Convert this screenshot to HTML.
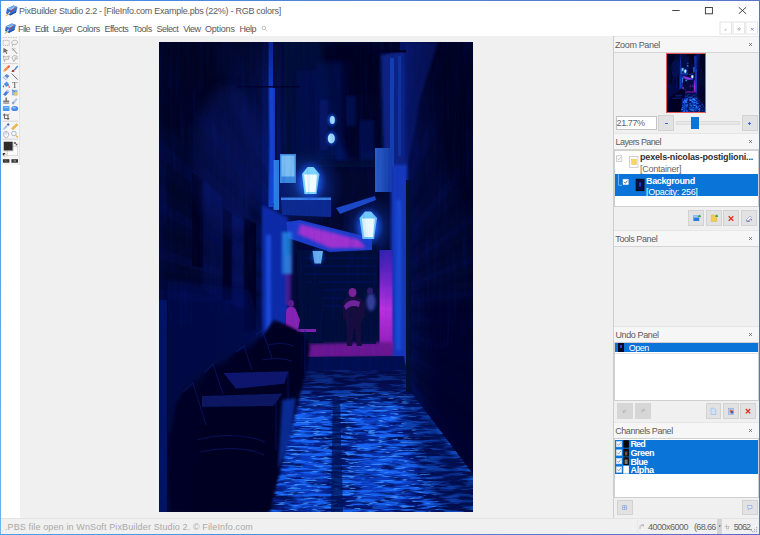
<!DOCTYPE html>
<html><head><meta charset="utf-8"><title>PixBuilder Studio 2.2</title>
<style>
*{box-sizing:border-box;margin:0;padding:0}
html{background:#f0f0f0}html,body{width:760px;height:535px;overflow:hidden}
body{position:relative;font-family:"Liberation Sans",sans-serif;font-size:9px;color:#444}
.a{position:absolute}
.t{position:absolute;white-space:nowrap;line-height:1}
.btn{position:absolute;background:#e2e2e2;border:1px solid #d2d2d2}
.hdr{position:absolute;left:614px;width:145px;height:17px;background:#f6f6f6;border-bottom:1px solid #d4d4d4;border-top:1px solid #e6e6e6}
.list{position:absolute;left:614px;width:145px;background:#fff;border:1px solid #cfcfcf}
.sel{position:absolute;background:#0a74d9}
.x{position:absolute;left:748px;width:5px;height:5px}
</style></head><body>
<!-- window frame -->
<div class="a" style="left:0;top:0;width:760px;height:35.5px;background:#fff"></div>
<div class="a" style="left:0;top:0;width:760px;height:1px;background:linear-gradient(90deg,#4a90e4,#5a74c8)"></div>
<div class="a" style="left:0;top:0;width:1px;height:535px;background:linear-gradient(180deg,#4a90e4,#6cb4f0)"></div>
<div class="a" style="left:759px;top:0;width:1px;height:535px;background:#5a72c0"></div>
<div class="a" style="left:0;top:534px;width:760px;height:1px;background:linear-gradient(90deg,#4aa0e8,#5a6ac8)"></div>
<!-- window buttons -->
<svg class="a" style="left:660px;top:0" width="100" height="36" viewBox="0 0 100 36">
<path d="M12.2 10.5H19.7" stroke="#333" stroke-width="0.9" fill="none"/>
<rect x="45.4" y="7.5" width="7" height="6.3" stroke="#333" stroke-width="0.9" fill="none"/>
<path d="M78.8 7.2L86.2 13.8M86.2 7.2L78.8 13.8" stroke="#333" stroke-width="0.9" fill="none"/>
<g fill="#fff" stroke="#e4e4e4" stroke-width="1"><rect x="60" y="22" width="11.5" height="12"/><rect x="73" y="22" width="11.5" height="12"/><rect x="86" y="22" width="11.5" height="12"/></g>
<rect x="64.5" y="29.5" width="2" height="0.8" fill="#999"/>
<path d="M77 29.5L80 27.5M78 30h2v-2" stroke="#999" stroke-width="0.7" fill="none"/>
<path d="M91 28l2.5 2.5M93.500 28l-2.500 2.500" stroke="#7a8ac0" stroke-width="0.9" fill="none"/>
</svg>
<!-- toolbar -->
<div class="a" style="left:1px;top:36px;width:19px;height:482px;background:#fff"></div>
<div class="a" style="left:1px;top:36px;width:19px;height:128.500px;background:#f5f5f5;border-right:1px solid #e4e4e4"></div>
<svg class="a" style="left:0;top:36px;opacity:0.85" width="21" height="130" viewBox="0 36 21 130">
<path d="M3 37.500H17" stroke="#b8b8b8" stroke-width="0.8" stroke-dasharray="1.5 1"/>
<path d="M2.500 63.6H18" stroke="#c4c4c4" stroke-width="0.8"/>
<path d="M2.500 121.2H18" stroke="#c4c4c4" stroke-width="0.8"/>
<path d="M2.500 139.2H18" stroke="#c4c4c4" stroke-width="0.8"/>
<rect x="3.2" y="40.4" width="6" height="5" fill="none" stroke="#8a8a8a" stroke-width="0.7" stroke-dasharray="1.2 0.8"/>
<path d="M12.2 44.4c-1.5 -3 1 -4.5 3.500 -4c3 0.5 2.500 4 -1 4l-2 0l-0.500 2" fill="none" stroke="#8a8a8a" stroke-width="0.7"/>
<path d="M3.4000000000000004 47.8l5 3.200l-2.300 0.300l1.300 2.300l-1 0.500l-1.300 -2.300l-1.700 1.500z" fill="#555"/>
<path d="M12.2 48.3l5 5.500" stroke="#666" stroke-width="0.9"/><path d="M13.7 47.8l0.5 1.500M11.7 49.8l1.500 0.500M15.7 48.3l-1 1" stroke="#999" stroke-width="0.6"/>
<path d="M3.4000000000000004 56.1l3 1l2.800 -1.200l-0.800 3.500l-3 -0.300l-1 2.500z" fill="none" stroke="#8a8a8a" stroke-width="0.7"/>
<path d="M11.899999999999999 57.1l2 -1.500l3 0.500l0.500 2.500l-2.500 1l-1 2l-1 -2z" fill="none" stroke="#8a8a8a" stroke-width="0.7"/><circle cx="15.2" cy="58.1" r="0.8" fill="#aaa"/>
<path d="M3.2 71.7l1 -2.500l4 -3.800l1.700 1.700l-4 3.800z" fill="#f08030"/><path d="M7.2 66.2l2 -1l0.700 0.700l-1 2z" fill="#e03020"/><path d="M3.2 71.7l0.600 -1.600l1 1z" fill="#f0d080"/>
<path d="M11.7 71.9c0 -2 1 -2.500 2 -2l1 1c-0.500 1 -2 1.500 -3 1z" fill="#802020"/><path d="M13.899999999999999 69.5l3.300 -4l1 1l-3.300 4z" fill="#2870d8"/>
<path d="M3.0 77.6l3.500 -3.500l3 2l-3.500 3.500z" fill="#3878e0"/><path d="M3.0 77.6l1.500 -1.500l3 2l-1.500 1.500z" fill="#e8f0ff" stroke="#3878e0" stroke-width="0.4"/>
<path d="M11.7 73.6l6 6" stroke="#444" stroke-width="0.9"/>
<path d="M3.7 84.0l3 -2.500l2.500 3l-3 2.500z" fill="#3080e8"/><path d="M3.2 85.0c-0.8 1.500 -0.500 2.500 0.300 2.500c0.800 0 1 -1 -0.300 -2.500z" fill="#2060d0"/><path d="M7.2 85.5c2 0 2.500 1 2 2.500" stroke="#e03030" stroke-width="1" fill="none"/>
<text x="14.7" y="87.5" font-family="Liberation Serif,serif" font-size="9" text-anchor="middle" fill="#333">T</text>
<path d="M3.0 94.6l4 -4.500l2.500 1.500l-4 4.500z" fill="#2868e0"/><path d="M5.7 91.1l1.300 -1.500l2.500 1.500l-1.300 1.500z" fill="#a8c8f8"/>
<rect x="11.899999999999999" y="89.8" width="5.600" height="5.600" fill="#78a8e8"/><rect x="14.2" y="92.1" width="3.300" height="3.300" fill="#e8c050"/><path d="M11.899999999999999 89.8l3 2" stroke="#2858c0" stroke-width="0.8"/>
<path d="M5.4 97.6h1.600v3h2.200v2h-6v-2h2.200z" fill="#666"/><rect x="3.2" y="102.8" width="6" height="1" fill="#888"/>
<path d="M11.7 103.1l4.500 -5l1.500 1.300l-4.500 5z" fill="#a8c4ec"/><path d="M11.7 103.1l1.500 -1.700l1.500 1.300l-1.500 1.700z" fill="#8090b0"/>
<rect x="2.9000000000000004" y="106.0" width="6.600" height="5" rx="0.8" fill="#3088ec"/><rect x="3.7" y="106.7" width="5" height="1.500" fill="#70b4f8"/>
<ellipse cx="14.7" cy="108.5" rx="3.400" ry="2.600" fill="#2878e4"/><ellipse cx="14.2" cy="107.7" rx="1.800" ry="1" fill="#70b4f8"/>
<path d="M4.4 113.6v5h5M3.0 115.0h5v5" fill="none" stroke="#333" stroke-width="0.9"/><path d="M7.7 115.3l1.800 -1.800" stroke="#555" stroke-width="0.6"/>
<path d="M3.0 129.79999999999998l0.500 -1.800l3 -3l1.300 1.300l-3 3z" fill="#88b8f0"/><path d="M6.7 124.6l1.500 -1.500l1.500 1.500l-1.500 1.500z" fill="#2050b0"/>
<path d="M11.399999999999999 128.4l5 -5l1.600 1.600l-5 5z" fill="#f0b030" stroke="#c88818" stroke-width="0.4"/>
<path d="M3.7 134.8c-0.500 -2 0.500 -3 1.500 -3.200c1.500 -0.300 3.500 0.500 3.500 2.500c0 2 -1 3.500 -2.500 3.500c-1.500 0 -2 -1 -2.500 -2.800z" fill="#f4f8ff" stroke="#7890b8" stroke-width="0.7"/><path d="M5.2 131.8v2.500M6.7 131.5v2.800" stroke="#7890b8" stroke-width="0.5"/>
<circle cx="13.899999999999999" cy="133.5" r="2.300" fill="#f4f8ff" stroke="#9098a8" stroke-width="0.8"/><path d="M15.7 135.3l2.200 2.200" stroke="#e0a030" stroke-width="1.200"/>
<rect x="7.500" y="146.500" width="10.200" height="9.200" fill="#fff" stroke="#c0c0c0" stroke-width="0.6"/>
<rect x="3.700" y="141.700" width="9" height="8.800" fill="#0a0a0a"/><path d="M4 150.800h9M13 142v8.800" stroke="#777" stroke-width="0.6" fill="none"/>
<path d="M14.500 142.500l2.500 2.500M14.500 142.500h1.500M14.500 142.500v1.500M17 145v-1.500M17 145h-1.500" stroke="#222" stroke-width="0.7" fill="none"/>
<rect x="2.800" y="153" width="2.400" height="2.400" fill="#111"/><rect x="4.300" y="154.300" width="2.200" height="2.200" fill="#fff" stroke="#999" stroke-width="0.4"/>
<rect x="2.900" y="159.200" width="6.500" height="3.500" fill="#161616"/><rect x="11.400" y="159.200" width="6.600" height="3.500" fill="#161616"/>
<path d="M5.500 160.300l1.200 1.200" stroke="#ddd" stroke-width="0.6"/><rect x="13.500" y="160.600" width="2.500" height="0.700" fill="#ddd"/>
</svg>
<svg class="a" style="left:5px;top:4.5px" width="13.0" height="12.0" viewBox="0 0 13 12"><path d="M2 3.500L8.500 0.500L12.500 2L11 7.500L5 10.500L1 8.500Z" fill="#2e6fd0"/><path d="M2 3.500L8.500 0.500L12.500 2L6.500 5Z" fill="#68a8f0"/><path d="M3 3.500l3 0.800l3 -1.800" stroke="#cfe4ff" stroke-width="0.7" fill="none"/><path d="M5 10.500L11 7.500L11.300 6.300L5.200 9.300Z" fill="#1848a0"/><path d="M12.300 0.800L5.500 7.500L4.500 6.700Z" fill="#e03828"/><path d="M5.500 7.500L4.500 6.700L2.800 8.800L3.500 9.400Z" fill="#d8dce8"/><path d="M2.800 8.800L3.500 9.400L1 11.500L0.500 11Z" fill="#e8a020"/></svg>
<svg class="a" style="left:4px;top:22.8px" width="12.35" height="11.399999999999999" viewBox="0 0 13 12"><path d="M2 3.500L8.500 0.500L12.500 2L11 7.500L5 10.500L1 8.500Z" fill="#2e6fd0"/><path d="M2 3.500L8.500 0.500L12.500 2L6.500 5Z" fill="#68a8f0"/><path d="M3 3.500l3 0.800l3 -1.800" stroke="#cfe4ff" stroke-width="0.7" fill="none"/><path d="M5 10.500L11 7.500L11.300 6.300L5.200 9.300Z" fill="#1848a0"/><path d="M12.300 0.800L5.500 7.500L4.500 6.700Z" fill="#e03828"/><path d="M5.500 7.500L4.500 6.700L2.800 8.800L3.500 9.400Z" fill="#d8dce8"/><path d="M2.800 8.800L3.500 9.400L1 11.500L0.500 11Z" fill="#e8a020"/></svg>
<svg class="a" style="left:261px;top:25px" width="8" height="8" viewBox="0 0 8 8"><circle cx="3" cy="3" r="1.800" fill="none" stroke="#aaa" stroke-width="0.7"/><path d="M4.300 4.300l2 2" stroke="#bbb" stroke-width="0.8"/></svg>
<!-- photo -->
<svg class="a" style="left:159px;top:42px" width="314" height="470" viewBox="159 42 314 470"><defs>
<filter id="b1" x="-20%" y="-20%" width="140%" height="140%"><feGaussianBlur stdDeviation="0.7"/></filter>
<filter id="b2" x="-30%" y="-30%" width="160%" height="160%"><feGaussianBlur stdDeviation="1.6"/></filter>
<filter id="b3" x="-30%" y="-30%" width="160%" height="160%"><feGaussianBlur stdDeviation="3"/></filter>
<filter id="b4" x="-30%" y="-30%" width="160%" height="160%"><feGaussianBlur stdDeviation="6"/></filter>
<filter id="nzFloor" color-interpolation-filters="sRGB" x="0" y="0" width="100%" height="100%"><feTurbulence type="fractalNoise" baseFrequency="0.045 0.32" numOctaves="3" seed="7" result="n"/><feColorMatrix in="n" type="matrix" values="0 0 0 0 0.1  0 0 0 0 0.42  0 0 0 0 1  5 0 0 0 -2.2"/><feComposite in2="SourceGraphic" operator="in"/></filter><filter id="nzFloorS" color-interpolation-filters="sRGB" x="0" y="0" width="100%" height="100%"><feTurbulence type="fractalNoise" baseFrequency="0.09 0.5" numOctaves="2" seed="11" result="n"/><feColorMatrix in="n" type="matrix" values="0 0 0 0 0.25  0 0 0 0 0.58  0 0 0 0 1  7 0 0 0 -4.1"/><feComposite in2="SourceGraphic" operator="in"/></filter><filter id="nzFloorD" color-interpolation-filters="sRGB" x="0" y="0" width="100%" height="100%"><feTurbulence type="fractalNoise" baseFrequency="0.05 0.22" numOctaves="2" seed="21" result="n"/><feColorMatrix in="n" type="matrix" values="0 0 0 0 0.01  0 0 0 0 0.04  0 0 0 0 0.25  4.5 0 0 0 -2.1"/><feComposite in2="SourceGraphic" operator="in"/></filter>
<filter id="nzAll" color-interpolation-filters="sRGB" x="0" y="0" width="100%" height="100%"><feTurbulence type="fractalNoise" baseFrequency="0.3 0.018" numOctaves="2" seed="3" result="n"/><feColorMatrix in="n" type="matrix" values="0 0 0 0 0.03  0 0 0 0 0.14  0 0 0 0 0.7  2.4 0 0 0 -1.1"/><feComposite in2="SourceGraphic" operator="in"/></filter>
<linearGradient id="gLW" x1="0" y1="0" x2="1" y2="0"><stop offset="0" stop-color="#040c4a"/><stop offset="0.08" stop-color="#020836"/><stop offset="0.3" stop-color="#020834"/><stop offset="0.65" stop-color="#030c44"/><stop offset="0.82" stop-color="#061668"/><stop offset="1" stop-color="#061668" stop-opacity="0"/></linearGradient>
<linearGradient id="gTop" x1="0" y1="0" x2="0" y2="1"><stop offset="0" stop-color="#010420" stop-opacity="0.6"/><stop offset="1" stop-color="#010420" stop-opacity="0"/></linearGradient>
<linearGradient id="gRW" x1="0" y1="0" x2="1" y2="0"><stop offset="0" stop-color="#061264"/><stop offset="0.3" stop-color="#030a40"/><stop offset="1" stop-color="#020730"/></linearGradient>
<radialGradient id="gGlow1"><stop offset="0" stop-color="#2a7cf0" stop-opacity="0.8"/><stop offset="0.45" stop-color="#1448c8" stop-opacity="0.4"/><stop offset="1" stop-color="#0a2aa0" stop-opacity="0"/></radialGradient>
<radialGradient id="gGlow2"><stop offset="0" stop-color="#2a7cf0" stop-opacity="0.8"/><stop offset="0.45" stop-color="#1448c8" stop-opacity="0.35"/><stop offset="1" stop-color="#0a2aa0" stop-opacity="0"/></radialGradient>
<radialGradient id="gHalo"><stop offset="0" stop-color="#3a90ff" stop-opacity="1"/><stop offset="0.5" stop-color="#1c5cf0" stop-opacity="0.75"/><stop offset="1" stop-color="#0c38c8" stop-opacity="0"/></radialGradient><linearGradient id="gStreak" x1="0" y1="0" x2="0" y2="1"><stop offset="0" stop-color="#082490"/><stop offset="0.3" stop-color="#0e3cc0"/><stop offset="0.6" stop-color="#0a2ca0"/><stop offset="1" stop-color="#1248d0"/></linearGradient><linearGradient id="gAC2" x1="0" y1="0" x2="1" y2="0"><stop offset="0" stop-color="#2c60cc"/><stop offset="1" stop-color="#143ca4"/></linearGradient><linearGradient id="gPur" x1="0" y1="0" x2="0" y2="1"><stop offset="0" stop-color="#3420b0"/><stop offset="0.3" stop-color="#7026c8"/><stop offset="0.6" stop-color="#b830e0"/><stop offset="1" stop-color="#9020b8"/></linearGradient>
<linearGradient id="gFloor" gradientUnits="userSpaceOnUse" x1="268" y1="0" x2="473" y2="0"><stop offset="0" stop-color="#051a7c"/><stop offset="0.2" stop-color="#08269a"/><stop offset="0.33" stop-color="#041264"/><stop offset="0.5" stop-color="#072492"/><stop offset="0.68" stop-color="#051878"/><stop offset="1" stop-color="#030e4a"/></linearGradient>
<linearGradient id="gFloorV" gradientUnits="userSpaceOnUse" x1="0" y1="370" x2="0" y2="512"><stop offset="0" stop-color="#030a44" stop-opacity="0.8"/><stop offset="0.15" stop-color="#030a44" stop-opacity="0.45"/><stop offset="0.3" stop-color="#030a44" stop-opacity="0"/><stop offset="1" stop-color="#030a44" stop-opacity="0.05"/></linearGradient>
<clipPath id="cp"><rect x="159" y="42" width="314" height="470"/></clipPath>
<clipPath id="cpFL"><polygon points="302,371 405,370 408,388 473,474 473,512 266,512 290,425"/></clipPath><clipPath id="cpLW"><polygon points="159,42 215,42 268,150 268,372 159,512"/></clipPath>
<clipPath id="cpRW"><polygon points="406,42 473,42 473,474 408,388"/></clipPath>
</defs><g id="photoG" clip-path="url(#cp)"><rect x="159" y="42" width="314" height="470" fill="#02072e"/>
<rect x="159" y="42" width="140" height="470" fill="url(#gLW)"/>
<g clip-path="url(#cpLW)" opacity="0.45">
<polygon points="345,312 -154,277 -151,251" fill="#07167a" opacity="0.5"/>
<polygon points="345,312 -147,225 -142,200" fill="#01051e" opacity="0.5"/>
<polygon points="345,312 -136,174 -128,149" fill="#07167a" opacity="0.5"/>
<polygon points="345,312 -119,125 -108,101" fill="#01051e" opacity="0.5"/>
<polygon points="345,312 -96,77 -84,54" fill="#07167a" opacity="0.5"/>
<polygon points="345,312 -70,32 -54,11" fill="#01051e" opacity="0.5"/>
<polygon points="345,312 -38,-9 -21,-29" fill="#07167a" opacity="0.5"/>
<polygon points="345,312 -2,-48 17,-65" fill="#01051e" opacity="0.5"/>
<polygon points="345,312 37,-82 58,-98" fill="#07167a" opacity="0.5"/>
<polygon points="345,312 80,-112 103,-125" fill="#01051e" opacity="0.5"/>
<polygon points="345,312 126,-137 150,-148" fill="#07167a" opacity="0.5"/>
<polygon points="345,312 174,-158 199,-166" fill="#01051e" opacity="0.5"/>
<polygon points="345,312 224,-173 250,-179" fill="#07167a" opacity="0.5"/>
</g>
<polygon points="192,172 203,180 203,268 192,266" fill="#020628" filter="url(#b1)"/>
<polygon points="223,208 232,214 232,300 223,300" fill="#020628" filter="url(#b1)"/>
<polygon points="244,218 256,224 256,330 244,332" fill="#020628" filter="url(#b1)"/>
<polygon points="203,180 222,196 222,300 203,290" fill="#0a1c88" opacity="0.3" filter="url(#b2)"/>
<polygon points="232,214 244,222 244,310 232,305" fill="#0a22a0" opacity="0.4" filter="url(#b2)"/>
<polygon points="159,42 206,42 232,95 196,120 159,135" fill="#01041e" opacity="0.5" filter="url(#b4)"/>
<polygon points="215,42 268,42 272,200 262,205" fill="#08208c" opacity="0.22" filter="url(#b3)"/>
<polygon points="159,42 262,42 262,372 159,512" fill="#01041a" opacity="0.28"/>
<rect x="159" y="42" width="314" height="100" fill="url(#gTop)"/>
<polygon points="400,42 473,42 473,474 408,388 404,372" fill="url(#gRW)"/>
<g clip-path="url(#cpRW)" opacity="0.38">
<polygon points="345,312 432,-180 457,-175" fill="#081a80" opacity="0.45"/>
<polygon points="345,312 491,-166 516,-158" fill="#01051e" opacity="0.45"/>
<polygon points="345,312 548,-145 572,-134" fill="#081a80" opacity="0.45"/>
<polygon points="345,312 603,-117 625,-103" fill="#01051e" opacity="0.45"/>
<polygon points="345,312 653,-82 673,-65" fill="#081a80" opacity="0.45"/>
<polygon points="345,312 699,-42 717,-23" fill="#01051e" opacity="0.45"/>
<polygon points="345,312 739,4 755,25" fill="#081a80" opacity="0.45"/>
<polygon points="345,312 774,54 786,77" fill="#01051e" opacity="0.45"/>
<polygon points="345,312 802,109 812,133" fill="#081a80" opacity="0.45"/>
<polygon points="345,312 823,166 830,191" fill="#01051e" opacity="0.45"/>
<polygon points="345,312 837,225 841,251" fill="#081a80" opacity="0.45"/>
<polygon points="345,312 844,286 845,312" fill="#01051e" opacity="0.45"/>
<polygon points="345,312 844,347 841,373" fill="#081a80" opacity="0.45"/>
<polygon points="345,312 836,407 830,433" fill="#01051e" opacity="0.45"/>
<polygon points="345,312 821,467 812,491" fill="#081a80" opacity="0.45"/>
<polygon points="345,312 798,523 786,547" fill="#01051e" opacity="0.45"/>
<polygon points="345,312 769,577 755,599" fill="#081a80" opacity="0.45"/>
<polygon points="345,312 734,627 717,647" fill="#01051e" opacity="0.45"/>
<polygon points="345,312 692,672 673,689" fill="#081a80" opacity="0.45"/>
<polygon points="345,312 646,711 625,727" fill="#01051e" opacity="0.45"/>
</g>
<polygon points="408,42 473,42 473,474 410,392" fill="#01041a" opacity="0.25"/>
<polygon points="420,42 473,42 473,230 440,150" fill="#01051e" opacity="0.7" filter="url(#b4)"/>
<polygon points="425,300 473,300 473,474 430,415" fill="#02062a" opacity="0.7" filter="url(#b4)"/>
<rect x="284" y="42" width="100" height="125" fill="#020838" filter="url(#b3)"/>
<rect x="296" y="70" width="22" height="80" fill="#051058" opacity="0.5" filter="url(#b3)"/>
<rect x="336" y="60" width="18" height="100" fill="#061468" opacity="0.7" filter="url(#b2)"/>
<rect x="356" y="95" width="20" height="60" fill="#08207c" opacity="0.6" filter="url(#b2)"/>
<polygon points="322,42 382,42 382,150 350,162 334,130" fill="#01041a" opacity="0.85" filter="url(#b3)"/>
<rect x="317" y="62" width="26" height="95" fill="#061468" opacity="0.45" filter="url(#b3)"/>
<rect x="320" y="100" width="8" height="50" fill="#081c7c" opacity="0.5" filter="url(#b2)"/>
<rect x="346" y="96" width="10" height="30" fill="#051260" opacity="0.6" filter="url(#b2)"/>
<rect x="360" y="120" width="14" height="40" fill="#051468" opacity="0.55" filter="url(#b2)"/>
<polygon points="406,42 438,42 420,100 408,165 404,165" fill="#08208a" opacity="0.45" filter="url(#b2)"/>
<polygon points="381,55 405,50 406,170 384,170" fill="#082282" filter="url(#b2)"/>
<rect x="390" y="58" width="4" height="108" fill="#1446c0" opacity="0.8" filter="url(#b1)"/>
<rect x="398" y="56" width="3" height="100" fill="#0e38a8" opacity="0.8" filter="url(#b1)"/>
<rect x="366" y="50" width="40" height="2.500" fill="#020628" filter="url(#b1)"/>
<rect x="268.500" y="42" width="4.500" height="165" fill="url(#gStreak)" filter="url(#b1)"/>
<rect x="273.500" y="55" width="3.500" height="150" fill="#020830" filter="url(#b1)"/>
<rect x="236" y="86" width="64" height="1.500" fill="#020628" filter="url(#b1)"/>
<ellipse cx="308" cy="186" rx="36" ry="40" fill="url(#gGlow1)"/>
<ellipse cx="370" cy="228" rx="30" ry="34" fill="url(#gGlow2)"/>
<rect x="270" y="88" width="5" height="115" fill="#1546d4" opacity="0.85" filter="url(#b1)"/>
<ellipse cx="228" cy="160" rx="34" ry="75" fill="#08208a" opacity="0.28" filter="url(#b4)"/>
<rect x="273.500" y="160" width="5.500" height="50" fill="#2a80e4" filter="url(#b1)"/>
<polygon points="262,205 288,218 288,350 276,372 262,372" fill="#0b2aa8" filter="url(#b2)"/>
<rect x="266" y="235" width="5" height="120" fill="#1a4ad8" filter="url(#b2)"/>
<rect x="280" y="154" width="16" height="29" fill="#3a8ae0" filter="url(#b1)"/>
<rect x="281.500" y="155.500" width="13" height="21" fill="#8cccf8" opacity="0.8" filter="url(#b1)"/>
<polygon points="281,198 331,199 331,217 282,215" fill="#0c2c90" filter="url(#b1)"/>
<rect x="281" y="197.500" width="50" height="2.500" fill="#3a80e8" filter="url(#b1)"/>
<rect x="375" y="148" width="17" height="44" fill="url(#gAC2)" filter="url(#b1)"/>
<rect x="391" y="165" width="16" height="200" fill="#1238bc" filter="url(#b2)"/>
<rect x="396" y="200" width="5" height="150" fill="#1c50dc" opacity="0.8" filter="url(#b2)"/>
<polygon points="296,250 378,246 380,345 300,345" fill="#030838" filter="url(#b2)"/>
<polygon points="286,222 300,220 372,238 372,250 330,252 288,238" fill="#1a3ccc" filter="url(#b1)"/>
<polygon points="300,224 360,240 366,248 330,248 298,234" fill="#a030d0" filter="url(#b2)"/>
<polygon points="336,208 375,196 376,200 340,214" fill="#1a48c8" filter="url(#b1)"/>
<rect x="379.500" y="250" width="13" height="98" fill="url(#gPur)" filter="url(#b1)"/>
<polygon points="304,344 393,342 393,357 306,358" fill="#6c1692" filter="url(#b2)"/>
<rect x="285" y="255" width="6" height="50" fill="#5a1c9c" opacity="0.7" filter="url(#b2)"/>
<g stroke="#071462" stroke-width="1.6" opacity="0.7" filter="url(#b1)"><path d="M303 258H376M304 266H376M305 274H376M306 282H376M322 290H346M324 298H344M325 306H343"/></g>
<path d="M312 283c0 -4 6 -4 6 0l0 4c4 1 6 4 6 10l-1 46h-13l-2 -46c0 -6 1 -9 4 -10z" fill="#050a3a" filter="url(#b1)"/>
<path d="M349 292c0 -5 7 -5 7 0l0 4c6 1 9 5 10 12l-2 14l-3 0l1 24h-5l-3 -18l-2 18h-5l-1 -26l-3 -1l-1 -12c1 -7 3 -10 7 -11z" fill="#12093e" filter="url(#b1)"/>
<ellipse cx="352.500" cy="292.500" rx="4" ry="4.500" fill="#7a2498" filter="url(#b1)"/>
<path d="M344 306c3 -6 10 -7 16 -4l-1 5c-5 -2 -10 -1 -13 3z" fill="#8a2cb0" opacity="0.8" filter="url(#b1)"/>
<ellipse cx="371" cy="302" rx="4.500" ry="9" fill="#34409c" filter="url(#b2)"/>
<ellipse cx="370" cy="291" rx="3" ry="3.500" fill="#2a1c68" filter="url(#b1)"/>
<rect x="362" y="318" width="14" height="26" fill="#04083a" opacity="0.8" filter="url(#b1)"/>
<path d="M286 312c0 -6 8 -7 10 -2l4 10l-2 10h-12z" fill="#8424b4" filter="url(#b1)"/>
<ellipse cx="291" cy="303.500" rx="3" ry="3.500" fill="#5a1c90" filter="url(#b1)"/>
<rect x="296" y="329" width="20" height="3" fill="#7a20b0" filter="url(#b1)"/>
<polygon points="304,357 404,356 406,371 302,372" fill="#041050" filter="url(#b1)"/>
<polygon points="302,371 405,370 408,388 473,474 473,512 266,512 290,425" fill="url(#gFloor)"/>
<g clip-path="url(#cpFL)" fill="#0e46d8" filter="url(#b4)" opacity="0.75"><ellipse cx="311" cy="416" rx="18" ry="13"/><ellipse cx="306" cy="476" rx="22" ry="30"/><ellipse cx="376" cy="414" rx="28" ry="13"/><ellipse cx="384" cy="476" rx="32" ry="30"/></g>
<polygon points="302,371 405,370 408,388 473,474 473,512 266,512 290,425" fill="url(#gFloorV)"/>
<polygon points="302,371 405,370 408,388 473,474 473,512 266,512 290,425" fill="#fff" filter="url(#nzFloorD)" opacity="0.7"/>
<polygon points="302,371 405,370 408,388 473,474 473,512 266,512 290,425" fill="#fff" filter="url(#nzFloor)" opacity="0.9"/>
<g clip-path="url(#cpFL)"><polygon points="286,396 410,392 440,512 268,512" fill="#fff" filter="url(#nzFloorS)" opacity="0.85"/></g>
<polygon points="302,371 405,370 408,388 473,474 473,512 266,512 290,425" fill="url(#gFloorV)"/>
<polygon points="333,398 340,398 343,512 331,512" fill="#04125c" opacity="0.75" filter="url(#b1)"/>
<polygon points="404,372 408,372 473,500 473,512 466,512" fill="#04125c" opacity="0.35" filter="url(#b2)"/>
<polygon points="408,388 473,474 473,512 440,512 400,420" fill="#03104c" opacity="0.45" filter="url(#b4)"/>
<rect x="406" y="180" width="5" height="212" fill="#020730" filter="url(#b1)"/>
<polygon points="168,280 250,290 262,336 236,352 210,368 184,390 168,450" fill="#051062" opacity="0.45" filter="url(#b3)"/>
<polygon points="176,404 184,390 200,386 210,368 226,364 236,352 250,348 262,336 274,320 290,327 304,335 310,346 306,372 292,425 268,512 170,512 168,450" fill="#020626" filter="url(#b2)"/>
<polygon points="200,420 230,400 236,360 272,340 278,323 292,329 306,339 304,372 290,425 270,512 190,512" fill="#010420" filter="url(#b2)"/>
<g fill="none" stroke="#0a1c78" stroke-width="1.2" opacity="0.55" filter="url(#b1)"><path d="M183 392l10 -9l13 42M205 372l8 -8l10 30M197 440c20 -6 50 -6 68 2M200 452c22 -5 48 -5 64 3M236 352l8 -6l8 24M256 335l6 -5l10 28M262 360c10 -2 22 -2 30 1M268 345c8 -2 18 -2 26 1M288 372v40M276 395v55M305 330v45"/></g>
<rect x="159" y="300" width="8" height="212" fill="#061670" opacity="0.8" filter="url(#b1)"/>
<polygon points="223.500,373 288.700,371.300 284.400,383.800 236,388.800" fill="#08196c" filter="url(#b1)"/>
<polygon points="202,396 282.600,393.500 273.700,406 202,407" fill="#071660" filter="url(#b1)"/>
<polygon points="282,400 296,398 290,440 278,470" fill="#0c3cc0" opacity="0.7" filter="url(#b2)"/>
<ellipse cx="310.500" cy="181" rx="17" ry="21" fill="url(#gHalo)"/>
<ellipse cx="368.500" cy="226" rx="16" ry="20" fill="url(#gHalo)"/>
<ellipse cx="332" cy="120" rx="6" ry="8" fill="url(#gHalo)" opacity="0.8"/>
<ellipse cx="331.500" cy="138.500" rx="7" ry="9" fill="url(#gHalo)" opacity="0.8"/>
<ellipse cx="317.500" cy="257" rx="9" ry="10" fill="url(#gHalo)" opacity="0.6"/>
<polygon points="302,174 307.500,167 313.500,167 319.500,174 316.500,194 304.500,194" fill="#7cd4ff" filter="url(#b1)"/>
<polygon points="304,174.500 317.500,174.500 315.500,192 306,192" fill="#eefcff" filter="url(#b1)"/>
<polygon points="359.500,218 365,211.500 371,211.500 377,218 374,239 362.500,239" fill="#70c8ff" filter="url(#b1)"/>
<polygon points="362,218.500 375,218.500 373,237 364,237" fill="#e8faff" filter="url(#b1)"/>
<ellipse cx="332.300" cy="120" rx="2.500" ry="4" fill="#a8e0ff" filter="url(#b1)"/>
<ellipse cx="331.300" cy="138.500" rx="3.500" ry="5" fill="#a8e0ff" filter="url(#b1)"/>
<polygon points="312.500,251 323,251 321,263.500 314.500,263.500" fill="#6ab0f0" filter="url(#b1)"/>
<rect x="282" y="232" width="10" height="42" fill="#2a9cf0" opacity="0.7" filter="url(#b2)"/>
<polygon points="159,42 473,42 473,330 404,372 300,372 290,300 159,330" fill="#fff" filter="url(#nzAll)" opacity="0.14"/></g></svg>
<!-- right panels -->
<div class="a" style="left:613px;top:36px;width:1px;height:482px;background:#cfcfcf"></div>
<div class="hdr" style="top:35.500px"></div>
<div class="hdr" style="top:132.500px"></div>
<div class="hdr" style="top:229.500px"></div>
<div class="hdr" style="top:325.500px"></div>
<div class="hdr" style="top:421.500px"></div>
<svg class="a" style="left:0;top:0" width="760" height="535" viewBox="0 0 760 535"><g stroke="#666" stroke-width="0.8" fill="none">
<path d="M749 43l3 3m0-3l-3 3"/><path d="M749 140l3 3m0-3l-3 3"/><path d="M749 237l3 3m0-3l-3 3"/><path d="M749 333l3 3m0-3l-3 3"/><path d="M749 429l3 3m0-3l-3 3"/></g></svg>
<!-- zoom panel -->
<div class="a" style="left:666px;top:53px;width:40px;height:60px;background:#e05a5a"></div><svg class="a" style="left:667px;top:54px" width="38" height="58" viewBox="159 42 314 470" preserveAspectRatio="none"><use href="#photoG"/></svg>
<div class="a" style="left:615.500px;top:115.500px;width:41px;height:14.500px;background:#fff;border:1px solid #c4c4c4"></div>
<div class="btn" style="left:658px;top:115px;width:16px;height:15.500px"></div>
<div class="btn" style="left:741.500px;top:115px;width:16px;height:15.500px"></div>
<div class="a" style="left:676px;top:121px;width:64px;height:4px;background:#e7e7e7;border:1px solid #dcdcdc"></div>
<div class="a" style="left:691px;top:116.500px;width:7.500px;height:12px;background:#0a74d9"></div>
<div class="a" style="left:664.500px;top:122.500px;width:3px;height:1px;background:#4466cc"></div>
<div class="a" style="left:748px;top:122.500px;width:3px;height:1px;background:#4466cc"></div>
<div class="a" style="left:749px;top:121.500px;width:1px;height:3px;background:#4466cc"></div>
<!-- layers panel -->
<div class="list" style="top:150px;height:57px"></div>
<div class="sel" style="left:615px;top:173.700px;width:142.500px;height:22.300px"></div>
<svg class="a" style="left:614px;top:150px" width="145" height="80" viewBox="614 150 145 80">
<rect x="616.400" y="155.700" width="5.400" height="5.600" fill="#fff" stroke="#c4c4c4" stroke-width="0.8"/>
<path d="M617.600 158.600l1.200 1.300l2-2.700" stroke="#a8a8a8" stroke-width="0.7" fill="none"/>
<rect x="629.400" y="156.500" width="8.500" height="10.800" fill="#fff" stroke="#c4c4c4" stroke-width="0.8"/>
<rect x="631.700" y="159.200" width="4.600" height="5.400" fill="#f6d664" stroke="#e8c048" stroke-width="0.500"/>
<path d="M618.500 174v11.300h3.500" stroke="#8cc0f4" stroke-width="0.800" fill="none"/>
<rect x="623" y="179.200" width="5.300" height="5.500" fill="#fff" stroke="#d8e4f4" stroke-width="0.500"/>
<path d="M624.100 181.900l1.300 1.400l2-2.600" stroke="#444" stroke-width="0.800" fill="none"/>
<rect x="636.200" y="179.300" width="7.800" height="11.300" fill="#050e48" stroke="#0a0a14" stroke-width="1"/>
<rect x="639.300" y="182.500" width="1.500" height="4" fill="#2450d8"/>
<!-- button icons -->
<rect x="693.400" y="215.200" width="5.800" height="5.800" fill="#2a7ae4"/><rect x="693.400" y="215.200" width="5.800" height="2.500" fill="#9cc8f4"/><path d="M697.500 216.800l2.500-2.300l1 2.800z" fill="#30a040"/>
<path d="M711.300 215h3l1 1h1.500v5.500h-5.500z" fill="#f4cc50" stroke="#d8a830" stroke-width="0.400"/><path d="M714.800 216.500l2.300-2.300l1 2.800z" fill="#30a040"/>
<path d="M728.700 216.200l4.600 4.600m0-4.600l-4.600 4.600" stroke="#e03020" stroke-width="1.300" fill="none"/>
<path d="M746.500 219.500l3.500-3.500l1.500 1.500l-3.500 3.500z" fill="#f8f8ff" stroke="#5080d0" stroke-width="0.500"/><path d="M746 220.500l1.500 1l2.500-0.500" stroke="#3060c0" stroke-width="0.800" fill="none"/><circle cx="751.300" cy="219.800" r="0.800" fill="#e04040"/>
</svg>
<div class="btn" style="left:688.400px;top:210.300px;width:16px;height:16.100px;z-index:-1"></div>
<div class="btn" style="left:706.300px;top:210.300px;width:15.300px;height:16.100px;z-index:-1"></div>
<div class="btn" style="left:723.400px;top:210.300px;width:15.300px;height:16.100px;z-index:-1"></div>
<div class="btn" style="left:741.300px;top:210.300px;width:15.500px;height:16.100px;z-index:-1"></div>
<!-- undo panel -->
<div class="list" style="top:342px;height:58.500px"></div>
<div class="sel" style="left:615px;top:343.400px;width:142.500px;height:8.200px"></div>
<div class="a" style="left:615px;top:352.600px;width:142.500px;height:1px;background:#e4e4e4"></div>
<div class="a" style="left:618px;top:343.400px;width:5.600px;height:8.200px;background:#030928"></div>
<div class="a" style="left:620.300px;top:345px;width:1.300px;height:3px;background:#2048c8"></div>
<div class="a" style="left:616.900px;top:403.400px;width:16.100px;height:15.600px;background:#d6d6d6"></div>
<div class="a" style="left:635px;top:403.400px;width:16px;height:15.600px;background:#d6d6d6"></div>
<div class="btn" style="left:705.500px;top:403.400px;width:15.900px;height:15.600px"></div>
<div class="btn" style="left:723px;top:403.400px;width:16px;height:15.600px"></div>
<div class="btn" style="left:740.100px;top:403.400px;width:16px;height:15.600px"></div>
<svg class="a" style="left:614px;top:400px" width="145" height="22" viewBox="614 400 145 22">
<path d="M623.500 412.500c0-2 2-2.500 3-1.500M623 410.500l0.500 2l2-0.500" stroke="#aaa" stroke-width="0.700" fill="none"/>
<path d="M642 412.500v-2.500h2.500M643.500 409l1.200 1l-1.200 1" stroke="#aaa" stroke-width="0.700" fill="none"/>
<path d="M711 408.200h3.300l1.500 1.500v4.800h-4.800z" fill="#cfe2fa" stroke="#8cb0e4" stroke-width="0.500"/>
<rect x="728.500" y="408.200" width="5" height="6.300" fill="#b8d0f4" stroke="#7c9cd8" stroke-width="0.500"/><rect x="729.800" y="409.800" width="2.800" height="2.800" fill="#e07030"/><rect x="730.800" y="411" width="2.500" height="2.500" fill="#4060d0"/>
<path d="M745.800 409l4.400 4.400m0-4.400l-4.400 4.400" stroke="#e03020" stroke-width="1.300" fill="none"/>
</svg>
<!-- channels -->
<div class="list" style="top:438px;height:59.500px"></div>
<div class="sel" style="left:615px;top:439.600px;width:142.500px;height:34px"></div>
<svg class="a" style="left:614px;top:438px" width="145" height="80" viewBox="614 438 145 80">
<g fill="#f4f8fc" stroke="#c8d4e4" stroke-width="0.500">
<rect x="616.200" y="441.300" width="5.600" height="5.600"/><rect x="616.200" y="449.800" width="5.600" height="5.600"/><rect x="616.200" y="458.300" width="5.600" height="5.600"/><rect x="616.200" y="466.800" width="5.600" height="5.600"/></g>
<g stroke="#888" stroke-width="0.800" fill="none">
<path d="M617.300 444l1.300 1.400l2.200-2.800"/><path d="M617.300 452.500l1.300 1.400l2.200-2.800"/><path d="M617.300 461l1.300 1.400l2.200-2.800"/><path d="M617.300 469.500l1.300 1.400l2.200-2.800"/></g>
<rect x="623.300" y="440.200" width="5.600" height="7.500" fill="#050505"/>
<rect x="623.300" y="448.700" width="5.600" height="7.800" fill="#0a0a0a"/><rect x="624.800" y="451.500" width="2.600" height="4" fill="#555"/>
<rect x="623.300" y="457.200" width="5.600" height="7.800" fill="#101010"/><rect x="624.600" y="459.500" width="3" height="4.500" fill="#777"/>
<rect x="623.300" y="465.800" width="5.600" height="7.800" fill="#fff"/>
<path d="M622.500 505.500h4v4h-4zM624.500 505.500v4M622.500 507.500h4" stroke="#7c9cdc" stroke-width="0.600" fill="#dce8fa"/>
<path d="M747.500 505.500h4.500v3h-2.500l-1 1.500z" stroke="#7c9cdc" stroke-width="0.600" fill="#e4ecfa"/>
</svg>
<div class="btn" style="left:617.300px;top:500.200px;width:16px;height:15.300px;z-index:-1"></div>
<div class="btn" style="left:741.500px;top:500.200px;width:16px;height:15.300px;z-index:-1"></div>
<!-- status -->
<div class="a" style="left:1px;top:518px;width:758px;height:16px;background:#f0f0f0;border-top:1px solid #e4e4e4"></div>
<div class="a" style="left:717.300px;top:519px;width:5px;height:14.700px;background:#d4d4d4"></div>
<svg class="a" style="left:630px;top:518px" width="130" height="17" viewBox="630 518 130 17">
<path d="M637.700 520v13" stroke="#e4e4e4" stroke-width="0.800"/>
<path d="M640 529.200v-3.500h3.500M641.500 524.500h2v2" stroke="#a8a8a8" stroke-width="0.700" fill="none"/>
<path d="M718.800 525.500h2l-1 1.500z" fill="#333"/>
<path d="M725 526.500h4.500M726.500 524.500v4.500M728.500 526.500v2.500h-2" stroke="#b0b0b0" stroke-width="0.700" fill="none"/>
<g fill="#b4b4b4"><rect x="756" y="531" width="1.200" height="1.200"/><rect x="754" y="531" width="1.200" height="1.200"/><rect x="756" y="529" width="1.200" height="1.200"/><rect x="752" y="531" width="1.200" height="1.200"/><rect x="754" y="529" width="1.200" height="1.200"/><rect x="756" y="527" width="1.200" height="1.200"/></g>
</svg>
<div class="t" style="left:19.0px;top:7px;font-size:9px;color:#5c5c5c;letter-spacing:-0.27px">PixBuilder Studio 2.2 - [FileInfo.com Example.pbs (22%) - RGB colors]</div>
<div class="t" style="left:18.1px;top:25px;font-size:9px;color:#585858;letter-spacing:-0.67px">File</div>
<div class="t" style="left:35.1px;top:25px;font-size:9px;color:#585858;letter-spacing:-0.64px">Edit</div>
<div class="t" style="left:52.7px;top:25px;font-size:9px;color:#585858;letter-spacing:-0.70px">Layer</div>
<div class="t" style="left:76.5px;top:25px;font-size:9px;color:#585858;letter-spacing:-0.46px">Colors</div>
<div class="t" style="left:104.5px;top:25px;font-size:9px;color:#585858;letter-spacing:-0.51px">Effects</div>
<div class="t" style="left:132.9px;top:25px;font-size:9px;color:#585858;letter-spacing:-0.43px">Tools</div>
<div class="t" style="left:156.6px;top:25px;font-size:9px;color:#585858;letter-spacing:-0.56px">Select</div>
<div class="t" style="left:183.2px;top:25px;font-size:9px;color:#585858;letter-spacing:-0.52px">View</div>
<div class="t" style="left:204.9px;top:25px;font-size:9px;color:#585858;letter-spacing:-0.17px">Options</div>
<div class="t" style="left:239.4px;top:25px;font-size:9px;color:#585858;letter-spacing:-0.44px">Help</div>
<div class="t" style="left:614.9px;top:41px;font-size:9px;color:#5c5c5c;letter-spacing:-0.34px">Zoom Panel</div>
<div class="t" style="left:615.6px;top:138px;font-size:9px;color:#5c5c5c;letter-spacing:-0.60px">Layers Panel</div>
<div class="t" style="left:615.3px;top:235px;font-size:9px;color:#5c5c5c;letter-spacing:-0.41px">Tools Panel</div>
<div class="t" style="left:615.5px;top:331px;font-size:9px;color:#5c5c5c;letter-spacing:-0.39px">Undo Panel</div>
<div class="t" style="left:615.2px;top:427px;font-size:9px;color:#5c5c5c;letter-spacing:-0.43px">Channels Panel</div>
<div class="t" style="left:616.6px;top:119px;font-size:9px;color:#646464;letter-spacing:-0.43px">21.77%</div>
<div class="t" style="left:640.0px;top:153px;font-size:9px;color:#303030;letter-spacing:-0.17px;font-weight:700">pexels-nicolas-postiglioni...</div>
<div class="t" style="left:640.0px;top:165px;font-size:9px;color:#646464;letter-spacing:-0.26px">[Container]</div>
<div class="t" style="left:646.1px;top:177px;font-size:9px;color:#fff;letter-spacing:-0.38px;font-weight:700">Background</div>
<div class="t" style="left:646.1px;top:188px;font-size:9px;color:#fff;letter-spacing:-0.29px">[Opacity: 256]</div>
<div class="a" style="left:628.8px;top:344px;height:7.6px;width:24.6px;overflow:hidden"><div class="t" style="left:0;top:0;font-size:9px;color:#fff;letter-spacing:-0.48px">Open</div></div>
<div class="t" style="left:630.5px;top:440px;font-size:9px;color:#fff;letter-spacing:-0.91px;font-weight:700">Red</div>
<div class="t" style="left:630.5px;top:449px;font-size:9px;color:#fff;letter-spacing:-0.48px;font-weight:700">Green</div>
<div class="t" style="left:630.5px;top:458px;font-size:9px;color:#fff;letter-spacing:-0.64px;font-weight:700">Blue</div>
<div class="a" style="left:630.5px;top:466px;height:7.6px;width:27.6px;overflow:hidden"><div class="t" style="left:0;top:0;font-size:9px;color:#fff;letter-spacing:-0.35px;font-weight:700">Alpha</div></div>
<div class="t" style="left:4.9px;top:523px;font-size:9px;color:#a8a8a8;letter-spacing:0.13px">.PBS file open in WnSoft PixBuilder Studio 2. © FileInfo.com</div>
<div class="t" style="left:648.0px;top:523px;font-size:9px;color:#646464;letter-spacing:-0.52px">4000x6000</div>
<div class="t" style="left:694.0px;top:523px;font-size:9px;color:#646464;letter-spacing:-0.63px">(68.66</div>
<div class="t" style="left:733.7px;top:523px;font-size:9px;color:#646464;letter-spacing:-0.91px">5062,</div>
</body></html>
